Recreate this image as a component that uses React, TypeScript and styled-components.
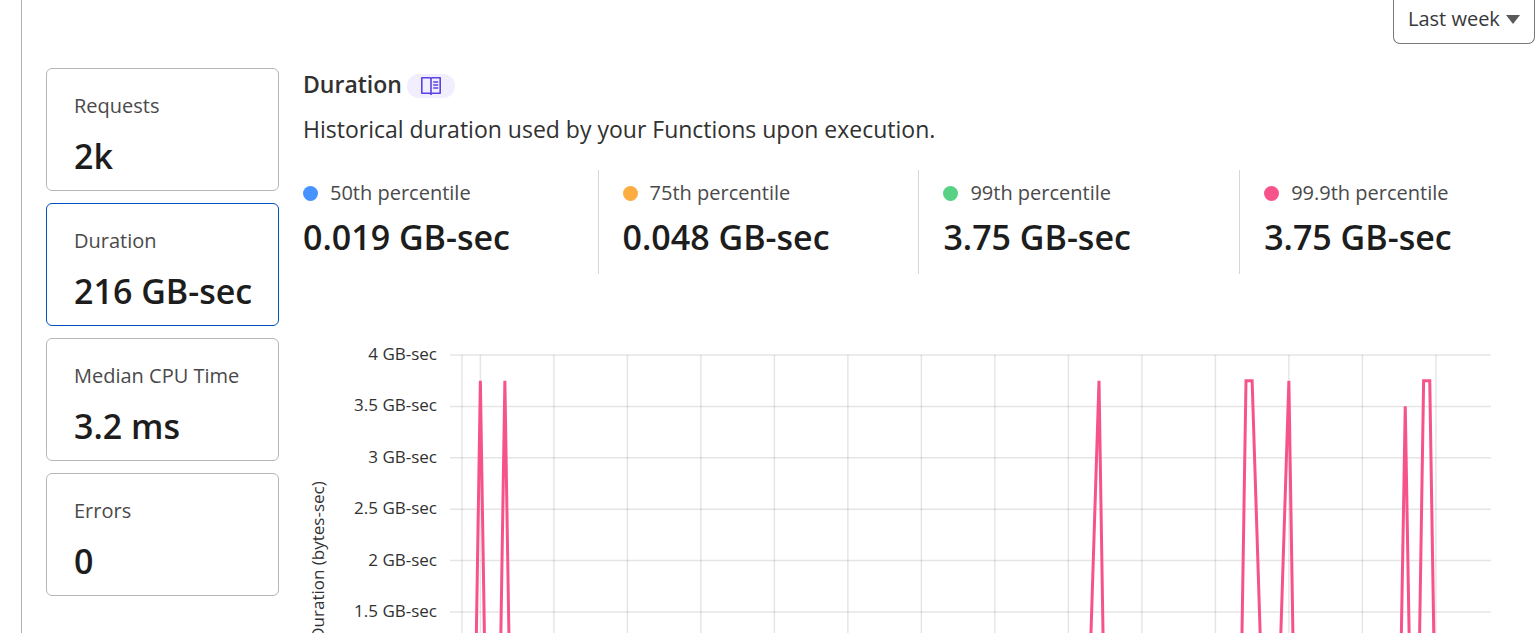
import React, { useLayoutEffect, useRef, useState } from "react";
import styled, { createGlobalStyle } from "styled-components";

const GlobalStyle = createGlobalStyle`
  * { box-sizing: border-box; }
  body {
    margin: 0;
    background: #fff;
    color: #313131;
    font-family: "Open Sans", "Noto Sans", sans-serif;
  }
`;

const Page = styled.div`
  height: 100vh;
  overflow: hidden;
  padding-left: 21px;
`;

const Panel = styled.section`
  min-height: 100%;
  border-left: 1px solid #b0b0b0;
`;

const Toolbar = styled.div`
  display: flex;
  justify-content: flex-end;
  height: 44px;
`;

const RangePicker = styled.label`
  display: grid;
  align-items: center;
  border: 1px solid #797979;
  border-top: 0;
  border-radius: 0 0 7px 7px;

  > * { grid-area: 1 / 1; }
`;

const RangeSelect = styled.select`
  appearance: none;
  border: 0;
  background: transparent;
  color: #36393a;
  font: inherit;
  font-size: 20px;
  line-height: 28px;
  padding: 0 34px 6px 14px;
`;

const Caret = styled.svg`
  justify-self: end;
  margin: 0 14px 5px 0;
  pointer-events: none;
`;

const Content = styled.div`
  display: flex;
  gap: 24px;
  padding: 24px 44px 0 24px;
`;

const Metrics = styled.nav`
  display: flex;
  flex: 0 0 233px;
  flex-direction: column;
  gap: 12px;
`;

const MetricCard = styled.button<{ $active?: boolean }>`
  display: flex;
  flex-direction: column;
  align-items: flex-start;
  gap: 14px;
  padding: 23px 0 12px 27px;
  border: 1px solid ${(p) => (p.$active ? "#0051c3" : "#b6b6b6")};
  border-radius: 6px;
  background: #fff;
  color: inherit;
  font: inherit;
  text-align: left;
`;

const Label = styled.span`
  color: #4a4a4a;
  font-size: 20px;
  line-height: 28px;
  white-space: nowrap;
`;

const Value = styled.span`
  color: #1d1d1d;
  font-size: 34px;
  font-weight: 600;
  line-height: 44px;
  white-space: nowrap;
`;

const Detail = styled.main`
  flex: 1;
  min-width: 0;
`;

const TitleRow = styled.div`
  display: flex;
  align-items: center;
  gap: 5px;
  height: 34px;
`;

const Title = styled.h2`
  margin: 0;
  font-size: 23px;
  font-weight: 600;
  line-height: 32px;
  padding-bottom: 2px;
`;

const DocsLink = styled.a`
  display: flex;
  align-items: center;
  justify-content: center;
  width: 48px;
  height: 24px;
  margin-top: 2px;
  border-radius: 12px;
  background: #f1eefd;
  color: #5b43e3;
`;

const Description = styled.p`
  margin: 10px 0 24px;
  font-size: 23px;
  line-height: 34px;
`;

const Percentiles = styled.div`
  display: grid;
  grid-template-columns: 124fr 135fr 135fr 106fr;
`;

const Percentile = styled.div`
  display: flex;
  flex-direction: column;
  gap: 8px;
  height: 104px;
  padding: 9px 0 0 24px;
  border-left: 1px solid #d5d7d8;

  &:first-child {
    padding-left: 0;
    border-left: 0;
  }
`;

const Legend = styled.div`
  display: flex;
  align-items: center;
  gap: 12px;
`;

const Dot = styled.i<{ $color: string }>`
  width: 15px;
  height: 15px;
  border-radius: 50%;
  background: ${(p) => p.$color};
`;

const ChartFrame = styled.div`
  margin-top: 66px;
`;

const ChartSvg = styled.svg`
  display: block;
  width: 100%;
  height: 440px;
`;

const ChartText = styled.text`
  fill: #313131;
  font-size: 17px;
`;

const metrics = [
  { label: "Requests", value: "2k" },
  { label: "Duration", value: "216 GB-sec" },
  { label: "Median CPU Time", value: "3.2 ms" },
  { label: "Errors", value: "0" },
];

const percentiles = [
  { label: "50th percentile", value: "0.019 GB-sec", color: "#4693ff" },
  { label: "75th percentile", value: "0.048 GB-sec", color: "#fbad41" },
  { label: "99th percentile", value: "3.75 GB-sec", color: "#57d184" },
  { label: "99.9th percentile", value: "3.75 GB-sec", color: "#f6538a" },
];

// [hour of the week, GB-sec]
const series: [number, number][] = [
  [0, 0], [2, 0], [3, 3.75], [4, 0], [6, 0], [7, 3.75], [8, 0],
  [102, 0], [104, 3.75], [105, 0], [127, 0], [128, 3.75], [129, 3.75],
  [131, 0], [133, 0], [135, 3.75], [136, 0], [153, 0], [154, 3.5],
  [155, 0], [156, 0], [157, 3.75], [158, 3.75], [159, 0], [168, 0],
];

const HOURS = 168;
const PLOT_LEFT = 159;
const PLOT_TOP = 15;
const PLOT_HEIGHT = 411;
const TICK = 12;

function DurationChart() {
  const frame = useRef<HTMLDivElement>(null);
  const [width, setWidth] = useState(1188);

  useLayoutEffect(() => {
    const node = frame.current;
    if (!node) return;
    const measure = () => setWidth(node.clientWidth);
    measure();
    const observer = new ResizeObserver(measure);
    observer.observe(node);
    return () => observer.disconnect();
  }, []);

  const x = (hour: number) => PLOT_LEFT + (hour / HOURS) * (width - PLOT_LEFT);
  const y = (value: number) => PLOT_TOP + (1 - value / 4) * PLOT_HEIGHT;
  const rows = [4, 3.5, 3, 2.5, 2, 1.5];
  const columns = [0, ...Array.from({ length: 14 }, (_, i) => 3 + i * 12)];
  const line = series.map(([h, v]) => `${x(h)},${y(v)}`).join(" ");

  return (
    <ChartFrame ref={frame}>
      <ChartSvg role="img" aria-label="Duration over the last week">
        <g stroke="#000" strokeOpacity="0.1" strokeWidth="1.5">
          {rows.map((v) => (
            <line key={v} x1={PLOT_LEFT - TICK} x2={x(HOURS)} y1={y(v)} y2={y(v)} />
          ))}
          {columns.map((h) => (
            <line key={h} x1={x(h)} x2={x(h)} y1={PLOT_TOP} y2={y(0) + TICK} />
          ))}
        </g>
        {rows.map((v) => (
          <ChartText key={v} x={PLOT_LEFT - 25} y={y(v) + 5} textAnchor="end">
            {`${v} GB-sec`}
          </ChartText>
        ))}
        <ChartText
          textAnchor="middle"
          transform={`translate(21 ${PLOT_TOP + PLOT_HEIGHT / 2}) rotate(-90)`}
        >
          Duration (bytes-sec)
        </ChartText>
        <polyline
          points={line}
          fill="none"
          stroke="#f6538a"
          strokeWidth="3"
          strokeLinejoin="miter"
        />
      </ChartSvg>
    </ChartFrame>
  );
}

function BookIcon() {
  return (
    <svg width="20" height="20" viewBox="0 0 20 20" fill="none" stroke="currentColor" aria-hidden="true">
      <path
        d="M10 2.5 9 1.8H.8v15.4H9l1 .9 1-.9h8.2V1.8H11ZM10 2.5V19"
        strokeWidth="1.6"
        strokeLinejoin="round"
      />
      <path d="M12.2 6h5M12.2 9h5M12.2 12h5" strokeWidth="1.5" />
    </svg>
  );
}

export default function App() {
  const [selected, setSelected] = useState("Duration");

  return (
    <Page>
      <GlobalStyle />
      <Panel>
        <Toolbar>
          <RangePicker>
            <RangeSelect aria-label="Time range" defaultValue="week">
              <option value="week">Last week</option>
            </RangeSelect>
            <Caret width="14" height="9" viewBox="0 0 14 9" aria-hidden="true">
              <path d="M0 0h14L7 9Z" fill="#595959" />
            </Caret>
          </RangePicker>
        </Toolbar>
        <Content>
          <Metrics aria-label="Metrics">
            {metrics.map((m) => (
              <MetricCard
                key={m.label}
                type="button"
                $active={m.label === selected}
                aria-pressed={m.label === selected}
                onClick={() => setSelected(m.label)}
              >
                <Label>{m.label}</Label>
                <Value>{m.value}</Value>
              </MetricCard>
            ))}
          </Metrics>
          <Detail>
            <TitleRow>
              <Title>Duration</Title>
              <DocsLink href="#docs" aria-label="Duration documentation">
                <BookIcon />
              </DocsLink>
            </TitleRow>
            <Description>Historical duration used by your Functions upon execution.</Description>
            <Percentiles>
              {percentiles.map((p) => (
                <Percentile key={p.label}>
                  <Legend>
                    <Dot $color={p.color} />
                    <Label>{p.label}</Label>
                  </Legend>
                  <Value>{p.value}</Value>
                </Percentile>
              ))}
            </Percentiles>
            <DurationChart />
          </Detail>
        </Content>
      </Panel>
    </Page>
  );
}
